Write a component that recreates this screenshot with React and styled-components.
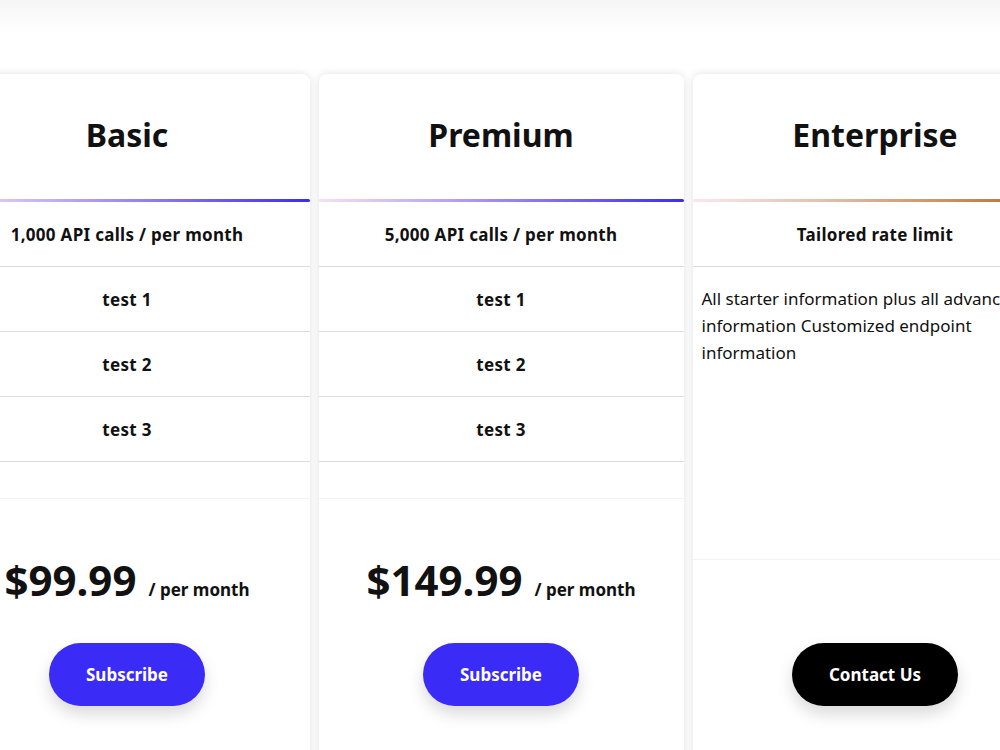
import React from "react";
import styled, { createGlobalStyle } from "styled-components";

const GlobalStyle = createGlobalStyle`
  body {
    margin: 0;
    background: #ffffff;
    font-family: "Noto Sans", "Lato", sans-serif;
    color: #111;
    overflow: hidden;
  }
`;

const TopShade = styled.div`
  height: 34px;
  background: linear-gradient(#f6f6f6, #ffffff);
`;

const Row = styled.div`
  display: flex;
  justify-content: center;
  gap: 9px;
  margin-top: 40px;
  padding-left: 2px;
`;

const Card = styled.div`
  flex-shrink: 0;
  width: 365px;
  height: 690px;
  display: flex;
  flex-direction: column;
  background: #fff;
  border-radius: 8px 8px 0 0;
  box-shadow: 0 0 9px rgba(0, 0, 0, 0.12);
`;

const Title = styled.h2`
  margin: 0;
  height: 125px;
  box-sizing: border-box;
  padding-bottom: 4px;
  display: flex;
  align-items: center;
  justify-content: center;
  font-size: 32px;
  font-weight: 700;
`;

const Bar = styled.div`
  height: 3px;
  border-radius: 0 3px 3px 0;
  background: ${(p) =>
    p.gold
      ? "linear-gradient(90deg, #fde6f0 0%, #e6c0aa 35%, #b5651f 100%)"
      : "linear-gradient(90deg, #f6e0f6 0%, #b9a3f3 35%, #3a2cf6 100%)"};
`;

const Features = styled.div`
  padding-bottom: ${(p) => (p.tall ? "0" : "36px")};
  border-bottom: 1px solid #f3f3f3;
`;

const Feature = styled.div`
  height: 64px;
  display: flex;
  align-items: center;
  justify-content: center;
  border-bottom: 1px solid #dcdcdc;
  font-size: 17px;
  letter-spacing: 0.3px;
  font-weight: 700;
`;

const Description = styled.p`
  margin: 0;
  height: 292px;
  box-sizing: border-box;
  padding: 18px 9px 0;
  font-size: 17px;
  line-height: 27px;
  white-space: nowrap;
`;

const PriceArea = styled.div`
  flex: 1;
  display: flex;
  flex-direction: column;
  align-items: center;
  justify-content: flex-end;
  padding-bottom: 58px;
`;

const Price = styled.div`
  display: flex;
  align-items: baseline;
  gap: 12px;
  margin-bottom: 35px;
`;

const Amount = styled.span`
  font-size: 42px;
  font-weight: 700;
`;

const Period = styled.span`
  font-size: 17px;
  font-weight: 700;
`;

const Button = styled.button`
  height: 63px;
  padding: 0 37px;
  border: none;
  border-radius: 32px;
  background: ${(p) => (p.dark ? "#000" : "#3a2cf6")};
  color: #fff;
  font-family: inherit;
  font-size: 17px;
  font-weight: 700;
  box-shadow: 0 8px 16px rgba(0, 0, 0, 0.15);
  cursor: pointer;
`;

const plans = [
  { name: "Basic", calls: "1,000 API calls / per month", price: "$99.99" },
  { name: "Premium", calls: "5,000 API calls / per month", price: "$149.99" },
];

const App = () => {
  return (
    <>
      <GlobalStyle />
      <TopShade />
      <Row>
        {plans.map((plan) => (
          <Card key={plan.name}>
            <Title>{plan.name}</Title>
            <Bar />
            <Features>
              <Feature>{plan.calls}</Feature>
              <Feature>test 1</Feature>
              <Feature>test 2</Feature>
              <Feature>test 3</Feature>
            </Features>
            <PriceArea>
              <Price>
                <Amount>{plan.price}</Amount>
                <Period>/ per month</Period>
              </Price>
              <Button>Subscribe</Button>
            </PriceArea>
          </Card>
        ))}
        <Card>
          <Title>Enterprise</Title>
          <Bar gold />
          <Features tall>
            <Feature>Tailored rate limit</Feature>
            <Description>
              All starter information plus all advanced
              <br />
              information Customized endpoint
              <br />
              information
            </Description>
          </Features>
          <PriceArea>
            <Button dark>Contact Us</Button>
          </PriceArea>
        </Card>
      </Row>
    </>
  );
};

export default App;
